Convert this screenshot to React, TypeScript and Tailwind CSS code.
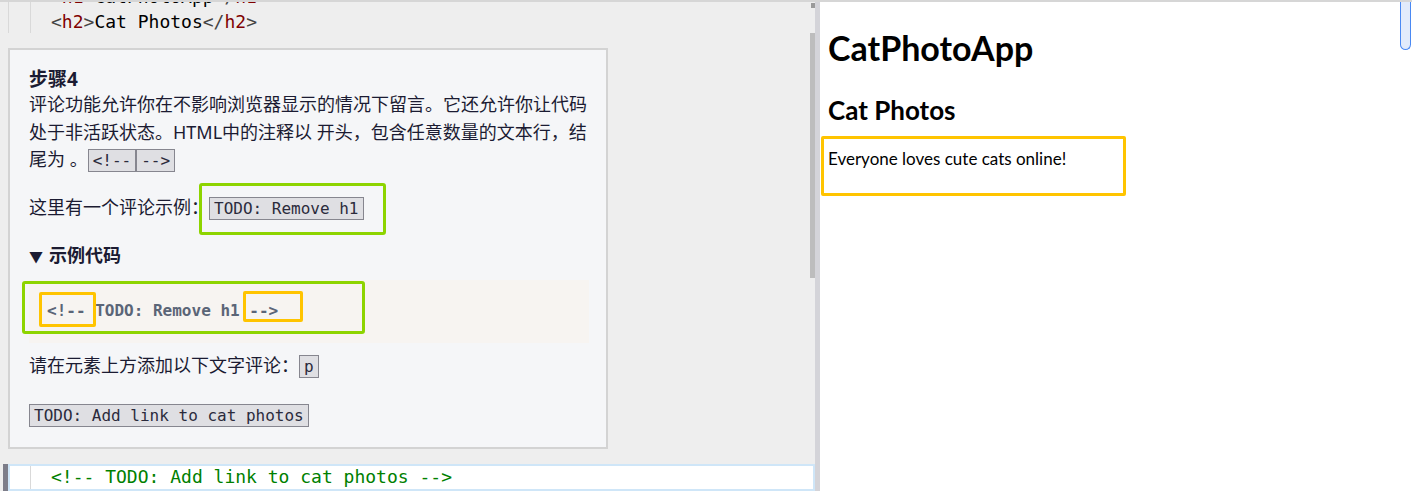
import React from "react";

const mono = "font-['DejaVu_Sans_Mono',monospace]";

function Code({ children, className = "" }: { children: React.ReactNode; className?: string }) {
  return (
    <code
      className={`font-['DejaVu_Sans_Mono',monospace] text-[16px] text-[#2b2b3c] bg-[#dfdfe3] border border-[#86868f] px-[4px] py-[1px] ${className}`}
    >
      {children}
    </code>
  );
}

export default function App() {
  return (
    <div className="w-[1412px] h-[491px] overflow-hidden flex border-t-2 border-[#d6d6d6] bg-white">
      {/* Left editor pane */}
      <div className="relative w-[815px] h-full bg-[#eeeeee] flex flex-col">
        {/* top code lines */}
        <div className="h-[31px] overflow-hidden flex shrink-0">
          <div className="w-[9px] border-r border-[#d9d9d9]" />
          <div className="w-[22px] border-r border-[#d9d9d9]" />
          <div className={`pl-[20px] -mt-[18px] text-[18px] leading-[25px] ${mono} whitespace-pre`}>
            <div>
              <span className="text-[#444]">&lt;</span>
              <span className="text-[#800000]">h1</span>
              <span className="text-[#444]">&gt;</span>
              <span className="text-black">CatPhotoApp</span>
              <span className="text-[#444]">&lt;/</span>
              <span className="text-[#800000]">h1</span>
              <span className="text-[#444]">&gt;</span>
            </div>
            <div>
              <span className="text-[#444]">&lt;</span>
              <span className="text-[#800000]">h2</span>
              <span className="text-[#444]">&gt;</span>
              <span className="text-black">Cat Photos</span>
              <span className="text-[#444]">&lt;/</span>
              <span className="text-[#800000]">h2</span>
              <span className="text-[#444]">&gt;</span>
            </div>
          </div>
        </div>

        {/* Instruction card */}
        <div className="relative mt-[15px] ml-[8px] w-[600px] h-[401px] shrink-0 border-2 border-[#d3d3d3] bg-[#f5f6f8] pl-[19px] pr-[17px] pt-[17px] font-['Noto_Sans','Noto_Sans_CJK_SC',sans-serif] text-[18px] text-[#1b1b32]">
          <div className="font-bold text-[19px] leading-[24px]">步骤4</div>
          <p className="leading-[27.5px]">
            评论功能允许你在不影响浏览器显示的情况下留言。它还允许你让代码处于非活跃状态。HTML中的注释以 开头，包含任意数量的文本行，结尾为 。<Code>&lt;!--</Code><Code>--&gt;</Code>
          </p>
          <p className="leading-[27.5px] mt-[19px]">
            这里有一个评论示例：<Code>TODO: Remove h1</Code>
          </p>
          <div className="leading-[27.5px] mt-[20px] font-bold">
            <span className="text-[14px] mr-[6px]">▼</span>示例代码
          </div>
          <div className="mt-[9px] h-[63px] bg-[#f7f4f1] flex items-center px-[18px]">
            <span className={`${mono} font-bold text-[16px] text-[#5b6577] whitespace-pre`}>
              &lt;!-- TODO: Remove h1 --&gt;
            </span>
          </div>
          <p className="leading-[27.5px] mt-[9px]">
            请在元素上方添加以下文字评论：<Code>p</Code>
          </p>
          <p className="leading-[27.5px] mt-[21px]">
            <Code>TODO: Add link to cat photos</Code>
          </p>

          {/* annotation overlays */}
          <div className="absolute left-[189px] top-[133px] w-[187px] h-[52px] border-[3px] border-[#8dd400] rounded-[3px]" />
          <div className="absolute left-[12px] top-[231px] w-[343px] h-[53px] border-[3px] border-[#8dd400] rounded-[3px]" />
          <div className="absolute left-[29px] top-[242px] w-[57px] h-[35px] border-[3px] border-[#ffc400] rounded-[2px]" />
          <div className="absolute left-[233px] top-[241px] w-[60px] h-[31px] border-[3px] border-[#ffc400] rounded-[2px]" />
        </div>

        {/* bottom active line */}
        <div className="mt-[15px] flex h-[27px] shrink-0">
          <div className="ml-[3px] w-[5px] bg-[#7d7d89]" />
          <div className="flex-1 flex border-2 border-[#cfe6f8] bg-white">
            <div className="w-[21px] border-r border-[#d9d9d9]" />
            <div className={`pl-[20px] text-[18px] leading-[22px] ${mono} text-[#008000] whitespace-pre`}>
              &lt;!-- TODO: Add link to cat photos --&gt;
            </div>
          </div>
        </div>

        {/* scrollbar overlay */}
        <div className="absolute right-0 top-0 w-[5px] h-full">
          <div className="absolute left-[1px] top-[1px] w-[4px] h-[5px] bg-[#9a9a9a]" />
          <div className="absolute left-0 top-[31px] w-[5px] h-[245px] bg-[#bdbdbd]" />
        </div>
      </div>

      {/* divider */}
      <div className="w-[5px] h-full bg-[#d4d4d9]" />

      {/* Right preview pane */}
      <div className="relative flex-1 h-full bg-white px-[8px] font-['Lato','Noto_Sans',sans-serif] text-black">
        <h1 className="mt-[26px] text-[34px] leading-[40px] font-bold">CatPhotoApp</h1>
        <h2 className="mt-[26px] text-[26px] leading-[32px] font-bold">Cat Photos</h2>
        <p className="mt-[21px] text-[17px] leading-[24px]">Everyone loves cute cats online!</p>

        <div className="absolute left-[1px] top-[134px] w-[305px] h-[60px] border-[3px] border-[#ffc400] rounded-[2px]" />

        <div className="absolute right-[1px] -top-[2px] w-[11px] h-[50px] border border-t-0 border-[#4a89f3] bg-[#e2ebfb] rounded-b-[6px]" />
      </div>
    </div>
  );
}
